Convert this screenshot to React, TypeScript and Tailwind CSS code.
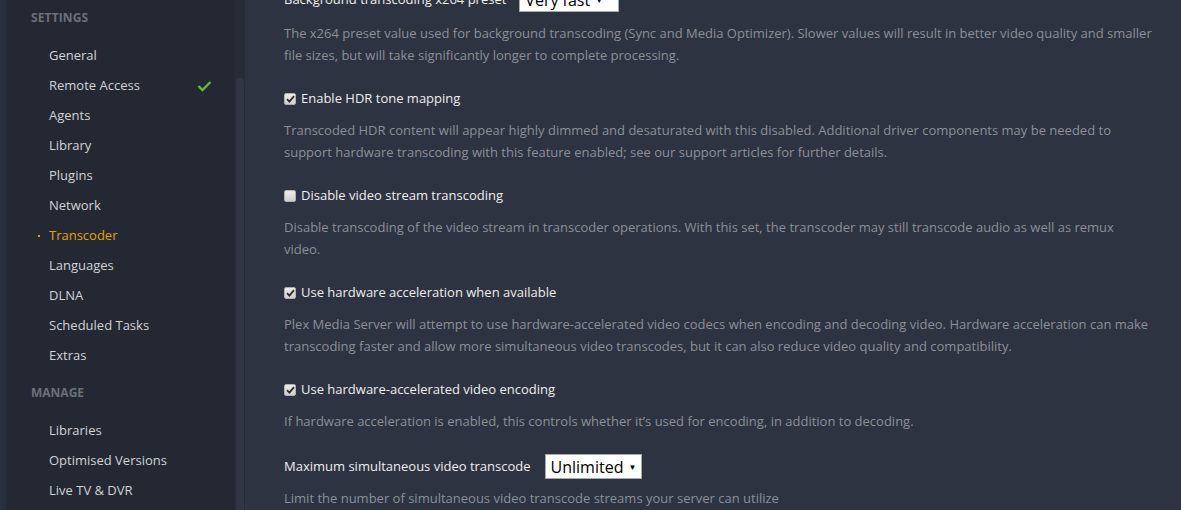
import React from "react";

const settingsItems = [
  "General",
  "Remote Access",
  "Agents",
  "Library",
  "Plugins",
  "Network",
  "Transcoder",
  "Languages",
  "DLNA",
  "Scheduled Tasks",
  "Extras",
];
const manageItems = ["Libraries", "Optimised Versions", "Live TV & DVR"];

function SideItem({ label }: { label: string }) {
  const active = label === "Transcoder";
  return (
    <div className="relative flex h-[30px] items-center pl-[43px] pr-[23px]">
      {active && (
        <span className="absolute left-[32px] top-[14px] h-[2px] w-[2px] bg-[#e5a00d]" />
      )}
      <span className={active ? "text-[#e5a00d]" : "text-[#d2d3d6]"}>{label}</span>
      {label === "Remote Access" && (
        <svg className="ml-auto" width="15" height="12" viewBox="0 0 15 12">
          <polyline
            points="1.5,6 5.5,10 13.5,2"
            fill="none"
            stroke="#63b946"
            strokeWidth="2.4"
          />
        </svg>
      )}
    </div>
  );
}

function CheckBox({ checked }: { checked: boolean }) {
  return (
    <span className="flex h-[12px] w-[12px] items-center justify-center rounded-[2px] border border-[#b0b0b0] bg-gradient-to-b from-[#ececec] to-[#d0d0d0]">
      {checked && (
        <svg width="9" height="8" viewBox="0 0 9 8">
          <polyline
            points="1,4.2 3.4,6.6 8,1.2"
            fill="none"
            stroke="#2d2d2d"
            strokeWidth="1.8"
          />
        </svg>
      )}
    </span>
  );
}

function Select({ value, width }: { value: string; width: string }) {
  return (
    <div
      className={`flex h-[25px] ${width} items-center border border-[#a9a9a9] bg-white pl-[5px] text-[16px] text-black`}
    >
      <span>{value}</span>
      <span className="ml-[5px] text-[8px]">▼</span>
    </div>
  );
}

function CheckSetting({
  label,
  checked,
  desc,
}: {
  label: string;
  checked: boolean;
  desc: string;
}) {
  return (
    <div className="mb-[21px] pt-[1px]">
      <div className="flex h-[22px] items-center gap-[5px] text-[#eeeeee]">
        <CheckBox checked={checked} />
        <span>{label}</span>
      </div>
      <p className="mt-[9px] leading-[22px] text-[#8c9099]">{desc}</p>
    </div>
  );
}

export default function App() {
  return (
    <div
      className="flex h-[510px] w-[1181px] overflow-hidden bg-[#2d3340] text-[13px]"
      style={{ fontFamily: '"Open Sans", "Noto Sans", sans-serif' }}
    >
      <div className="w-[6px] shrink-0 bg-[#2a303b]" />
      <aside className="flex w-[229px] shrink-0 flex-col bg-[#232833] pt-[8px]">
        <div className="mb-[13px] pl-[25px] text-[12px] font-bold leading-[20px] tracking-[0.01em] text-[#6b7079]">
          SETTINGS
        </div>
        {settingsItems.map((i) => (
          <SideItem key={i} label={i} />
        ))}
        <div className="mb-[13px] mt-[12px] pl-[25px] text-[12px] font-bold leading-[20px] text-[#6b7079]">
          MANAGE
        </div>
        {manageItems.map((i) => (
          <SideItem key={i} label={i} />
        ))}
      </aside>
      <div className="flex w-[10px] shrink-0 flex-col bg-[#272c37] pt-[78px]">
        <div className="mx-[1px] h-[440px] rounded-t-[4px] bg-[#313642]" />
      </div>
      <main className="flex-1 pl-[39px]">
        <div className="-mt-[13px] w-[868px]">
          <div className="mb-[21px]">
            <div className="flex h-[25px] items-center text-[#eeeeee]">
              <span>Background transcoding x264 preset</span>
              <div className="ml-[13px]">
                <Select value="Very fast" width="w-[100px]" />
              </div>
            </div>
            <p className="mt-[10px] leading-[22px] text-[#8c9099]">
              The x264 preset value used for background transcoding (Sync and Media
              Optimizer). Slower values will result in better video quality and smaller
              file sizes, but will take significantly longer to complete processing.
            </p>
          </div>
          <CheckSetting
            label="Enable HDR tone mapping"
            checked
            desc="Transcoded HDR content will appear highly dimmed and desaturated with this disabled. Additional driver components may be needed to support hardware transcoding with this feature enabled; see our support articles for further details."
          />
          <CheckSetting
            label="Disable video stream transcoding"
            checked={false}
            desc="Disable transcoding of the video stream in transcoder operations. With this set, the transcoder may still transcode audio as well as remux video."
          />
          <CheckSetting
            label="Use hardware acceleration when available"
            checked
            desc="Plex Media Server will attempt to use hardware-accelerated video codecs when encoding and decoding video. Hardware acceleration can make transcoding faster and allow more simultaneous video transcodes, but it can also reduce video quality and compatibility."
          />
          <CheckSetting
            label="Use hardware-accelerated video encoding"
            checked
            desc="If hardware acceleration is enabled, this controls whether it’s used for encoding, in addition to decoding."
          />
          <div className="mb-[21px] pt-[1px]">
            <div className="flex h-[25px] items-center text-[#eeeeee]">
              <span>Maximum simultaneous video transcode</span>
              <div className="ml-[14px]">
                <Select value="Unlimited" width="w-[97px]" />
              </div>
            </div>
            <p className="mt-[8px] leading-[22px] text-[#8c9099]">
              Limit the number of simultaneous video transcode streams your server can
              utilize
            </p>
          </div>
        </div>
      </main>
    </div>
  );
}
